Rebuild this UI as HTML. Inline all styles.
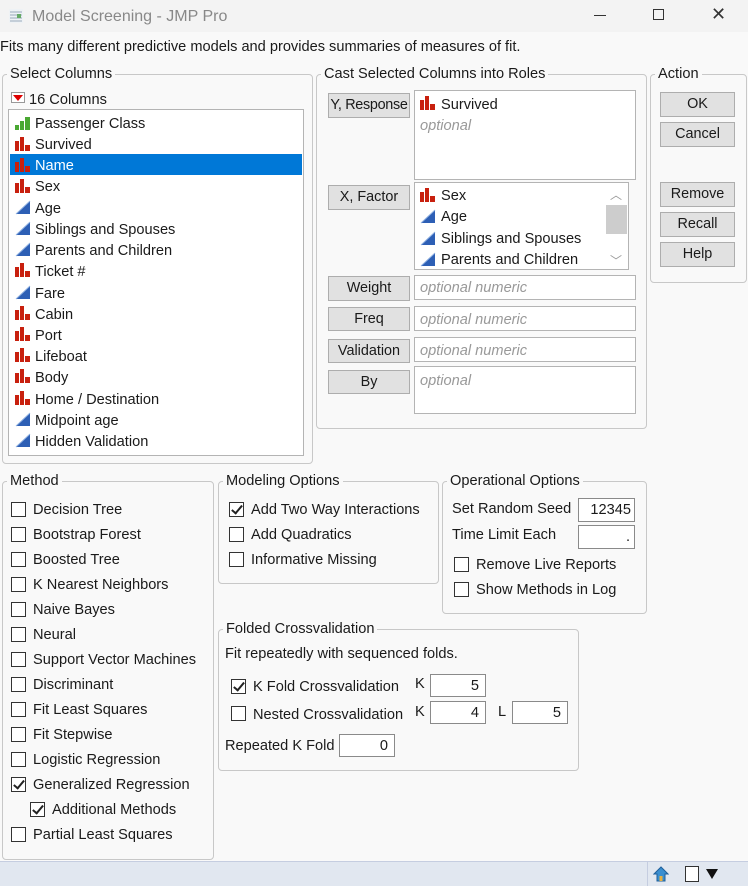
<!DOCTYPE html>
<html><head><meta charset="utf-8"><style>
*{box-sizing:border-box;margin:0;padding:0}
body{width:748px;height:886px;background:#f9f9f9;font-family:"Liberation Sans",sans-serif;font-size:14.6px;color:#1a1a1a;position:relative;overflow:hidden}
.a{position:absolute;white-space:nowrap}
.t{position:absolute;white-space:nowrap;line-height:17px;padding-top:2px}
.grp{position:absolute;border:1px solid #c8c8c8;border-radius:4px}
.gl{position:absolute;background:#f9f9f9;padding:0 3px;line-height:17px;top:-9px;left:4px}
.btn{position:absolute;background:#e1e1e1;border:1px solid #adadad;text-align:center;line-height:25px;white-space:nowrap;font-size:14.4px;display:flex;align-items:center;justify-content:center}
.box{position:absolute;background:#fff;border:1px solid #b4b4b4}
.cb{position:absolute;width:15px;height:15px;border:1px solid #333;background:#fff}
.cb.on::after{content:"";position:absolute;left:4px;top:0px;width:4px;height:9px;border:solid #222;border-width:0 2px 2px 0;transform:rotate(40deg)}
.ph{color:#999;font-style:italic}
.num{position:absolute;background:#fff;border:1px solid #8a8a8a;text-align:right;padding-right:6px;line-height:22px}
svg.i{position:absolute}
</style></head><body>
<div class="a" style="left:0;top:0;width:748px;height:32px;background:#f3f3f3"></div>
<svg class="i" style="left:9px;top:9px" width="14" height="14"><rect x="0" y="0" width="14" height="14" fill="#eef2f5"/><g stroke="#9ab" stroke-width="1"><line x1="1" y1="3" x2="13" y2="3"/><line x1="1" y1="6" x2="13" y2="6"/><line x1="1" y1="9" x2="13" y2="9"/><line x1="1" y1="12" x2="13" y2="12"/></g><rect x="8" y="5" width="4" height="4" fill="#6a6"/></svg>
<div class="t" style="left:32px;top:6px;color:#888;font-size:16px">Model Screening - JMP Pro</div>
<div class="a" style="left:594px;top:15px;width:12px;border-top:1px solid #333"></div>
<div class="a" style="left:653px;top:9px;width:11px;height:11px;border:1px solid #333"></div>
<div class="t" style="left:711px;top:4px;font-size:18px;color:#333">✕</div>
<div class="t" style="left:0;top:37px">Fits many different predictive models and provides summaries of measures of fit.</div>

<div class="grp" style="left:2px;top:74px;width:311px;height:390px"><div class="gl">Select Columns</div></div>
<div class="a" style="left:11px;top:92px;width:14px;height:11px;border:1px solid #999;background:#fff"></div>
<svg class="i" style="left:13px;top:95px" width="10" height="6"><path d="M0 0H10L5 6Z" fill="#d00"/></svg>
<div class="t" style="left:29px;top:90px">16 Columns</div>
<div class="box" style="left:8px;top:109px;width:296px;height:347px"></div>
<div class="a" style="left:10px;top:154px;width:292px;height:21px;background:#0078d7"></div>
<svg width="0" height="0" style="position:absolute"><defs>
<g id="nom"><rect x="0" y="4" width="4" height="10" fill="#c8200e"/><rect x="5" y="0" width="4" height="14" fill="#c8200e"/><rect x="10" y="8" width="5" height="6" fill="#c8200e"/></g>
<g id="ord"><rect x="0" y="9" width="4" height="5" fill="#4aa832"/><rect x="5" y="5" width="4" height="9" fill="#4aa832"/><rect x="10" y="1" width="5" height="13" fill="#4aa832"/></g>
<g id="con"><path d="M1 14L15 1V14Z" fill="#2d5fb5"/><path d="M1 14L15 1" stroke="#8fb0e0" stroke-width="1"/></g>
</defs></svg>
<svg class="i" style="left:15px;top:116px" width="16" height="15"><use href="#ord"/></svg><div class="t" style="left:35px;top:114px">Passenger Class</div>
<svg class="i" style="left:15px;top:137px" width="16" height="15"><use href="#nom"/></svg><div class="t" style="left:35px;top:135px">Survived</div>
<svg class="i" style="left:15px;top:158px" width="16" height="15"><use href="#nom"/></svg><div class="t" style="left:35px;top:156px;color:#fff">Name</div>
<svg class="i" style="left:15px;top:179px" width="16" height="15"><use href="#nom"/></svg><div class="t" style="left:35px;top:177px">Sex</div>
<svg class="i" style="left:15px;top:200px" width="16" height="15"><use href="#con"/></svg><div class="t" style="left:35px;top:199px">Age</div>
<svg class="i" style="left:15px;top:221px" width="16" height="15"><use href="#con"/></svg><div class="t" style="left:35px;top:220px">Siblings and Spouses</div>
<svg class="i" style="left:15px;top:242px" width="16" height="15"><use href="#con"/></svg><div class="t" style="left:35px;top:241px">Parents and Children</div>
<svg class="i" style="left:15px;top:263px" width="16" height="15"><use href="#nom"/></svg><div class="t" style="left:35px;top:262px">Ticket #</div>
<svg class="i" style="left:15px;top:285px" width="16" height="15"><use href="#con"/></svg><div class="t" style="left:35px;top:284px">Fare</div>
<svg class="i" style="left:15px;top:306px" width="16" height="15"><use href="#nom"/></svg><div class="t" style="left:35px;top:305px">Cabin</div>
<svg class="i" style="left:15px;top:327px" width="16" height="15"><use href="#nom"/></svg><div class="t" style="left:35px;top:326px">Port</div>
<svg class="i" style="left:15px;top:348px" width="16" height="15"><use href="#nom"/></svg><div class="t" style="left:35px;top:347px">Lifeboat</div>
<svg class="i" style="left:15px;top:369px" width="16" height="15"><use href="#nom"/></svg><div class="t" style="left:35px;top:368px">Body</div>
<svg class="i" style="left:15px;top:391px" width="16" height="15"><use href="#nom"/></svg><div class="t" style="left:35px;top:390px">Home / Destination</div>
<svg class="i" style="left:15px;top:412px" width="16" height="15"><use href="#con"/></svg><div class="t" style="left:35px;top:411px">Midpoint age</div>
<svg class="i" style="left:15px;top:433px" width="16" height="15"><use href="#con"/></svg><div class="t" style="left:35px;top:432px">Hidden Validation</div>

<div class="grp" style="left:316px;top:74px;width:331px;height:355px"><div class="gl">Cast Selected Columns into Roles</div></div>
<div class="btn" style="left:328px;top:93px;width:82px;height:25px;letter-spacing:-0.3px">Y, Response</div>
<div class="box" style="left:414px;top:90px;width:222px;height:90px"></div>
<svg class="i" style="left:420px;top:96px" width="16" height="15"><use href="#nom"/></svg><div class="t" style="left:441px;top:95px">Survived</div>
<div class="t ph" style="left:420px;top:116px">optional</div>
<div class="btn" style="left:328px;top:185px;width:82px;height:25px">X, Factor</div>
<div class="box" style="left:414px;top:182px;width:215px;height:88px"></div>
<div class="a" style="left:606px;top:205px;width:21px;height:29px;background:#cdcdcd"></div>
<div class="t" style="left:610px;top:185px;color:#999;font-size:12px">︿</div>
<div class="t" style="left:610px;top:251px;color:#999;font-size:12px">﹀</div>
<svg class="i" style="left:420px;top:188px" width="16" height="15"><use href="#nom"/></svg><div class="t" style="left:441px;top:186px">Sex</div>
<svg class="i" style="left:420px;top:209px" width="16" height="15"><use href="#con"/></svg><div class="t" style="left:441px;top:207px">Age</div>
<svg class="i" style="left:420px;top:231px" width="16" height="15"><use href="#con"/></svg><div class="t" style="left:441px;top:229px">Siblings and Spouses</div>
<svg class="i" style="left:420px;top:252px" width="16" height="15"><use href="#con"/></svg><div class="t" style="left:441px;top:250px">Parents and Children</div>
<div class="btn" style="left:328px;top:276px;width:82px;height:25px">Weight</div>
<div class="box" style="left:414px;top:275px;width:222px;height:25px"></div><div class="t ph" style="left:420px;top:278px">optional numeric</div>
<div class="btn" style="left:328px;top:307px;width:82px;height:24px">Freq</div>
<div class="box" style="left:414px;top:306px;width:222px;height:25px"></div><div class="t ph" style="left:420px;top:310px">optional numeric</div>
<div class="btn" style="left:328px;top:339px;width:82px;height:24px">Validation</div>
<div class="box" style="left:414px;top:337px;width:222px;height:25px"></div><div class="t ph" style="left:420px;top:341px">optional numeric</div>
<div class="btn" style="left:328px;top:370px;width:82px;height:24px">By</div>
<div class="box" style="left:414px;top:366px;width:222px;height:48px"></div><div class="t ph" style="left:420px;top:371px">optional</div>

<div class="grp" style="left:650px;top:74px;width:97px;height:209px"><div class="gl">Action</div></div>
<div class="btn" style="left:660px;top:92px;width:75px;height:25px">OK</div>
<div class="btn" style="left:660px;top:122px;width:75px;height:25px">Cancel</div>
<div class="btn" style="left:660px;top:182px;width:75px;height:25px">Remove</div>
<div class="btn" style="left:660px;top:212px;width:75px;height:25px">Recall</div>
<div class="btn" style="left:660px;top:242px;width:75px;height:25px">Help</div>

<div class="grp" style="left:2px;top:481px;width:212px;height:379px"><div class="gl">Method</div></div>
<div class="cb" style="left:11px;top:502px"></div><div class="t" style="left:33px;top:500px">Decision Tree</div>
<div class="cb" style="left:11px;top:527px"></div><div class="t" style="left:33px;top:525px">Bootstrap Forest</div>
<div class="cb" style="left:11px;top:552px"></div><div class="t" style="left:33px;top:550px">Boosted Tree</div>
<div class="cb" style="left:11px;top:577px"></div><div class="t" style="left:33px;top:575px">K Nearest Neighbors</div>
<div class="cb" style="left:11px;top:602px"></div><div class="t" style="left:33px;top:600px">Naive Bayes</div>
<div class="cb" style="left:11px;top:627px"></div><div class="t" style="left:33px;top:625px">Neural</div>
<div class="cb" style="left:11px;top:652px"></div><div class="t" style="left:33px;top:650px">Support Vector Machines</div>
<div class="cb" style="left:11px;top:677px"></div><div class="t" style="left:33px;top:675px">Discriminant</div>
<div class="cb" style="left:11px;top:702px"></div><div class="t" style="left:33px;top:700px">Fit Least Squares</div>
<div class="cb" style="left:11px;top:727px"></div><div class="t" style="left:33px;top:725px">Fit Stepwise</div>
<div class="cb" style="left:11px;top:752px"></div><div class="t" style="left:33px;top:750px">Logistic Regression</div>
<div class="cb on" style="left:11px;top:777px"></div><div class="t" style="left:33px;top:775px">Generalized Regression</div>
<div class="cb on" style="left:30px;top:802px"></div><div class="t" style="left:52px;top:800px">Additional Methods</div>
<div class="cb" style="left:11px;top:827px"></div><div class="t" style="left:33px;top:825px">Partial Least Squares</div>

<div class="grp" style="left:218px;top:481px;width:221px;height:103px"><div class="gl">Modeling Options</div></div>
<div class="cb on" style="left:229px;top:502px"></div><div class="t" style="left:251px;top:500px">Add Two Way Interactions</div>
<div class="cb" style="left:229px;top:527px"></div><div class="t" style="left:251px;top:525px">Add Quadratics</div>
<div class="cb" style="left:229px;top:552px"></div><div class="t" style="left:251px;top:550px">Informative Missing</div>

<div class="grp" style="left:442px;top:481px;width:205px;height:133px"><div class="gl">Operational Options</div></div>
<div class="t" style="left:452px;top:499px">Set Random Seed</div>
<div class="num" style="left:578px;top:498px;width:57px;height:24px;padding-right:3px">12345</div>
<div class="t" style="left:452px;top:525px">Time Limit Each</div>
<div class="num" style="left:578px;top:525px;width:57px;height:24px;padding-right:4px">.</div>
<div class="cb" style="left:454px;top:557px"></div><div class="t" style="left:476px;top:555px">Remove Live Reports</div>
<div class="cb" style="left:454px;top:582px"></div><div class="t" style="left:476px;top:580px">Show Methods in Log</div>

<div class="grp" style="left:218px;top:629px;width:361px;height:142px"><div class="gl">Folded Crossvalidation</div></div>
<div class="t" style="left:225px;top:644px">Fit repeatedly with sequenced folds.</div>
<div class="cb on" style="left:231px;top:679px"></div><div class="t" style="left:253px;top:677px">K Fold Crossvalidation</div>
<div class="t" style="left:415px;top:674px">K</div>
<div class="num" style="left:430px;top:674px;width:56px;height:23px">5</div>
<div class="cb" style="left:231px;top:706px"></div><div class="t" style="left:253px;top:705px">Nested Crossvalidation</div>
<div class="t" style="left:415px;top:702px">K</div>
<div class="num" style="left:430px;top:701px;width:56px;height:23px">4</div>
<div class="t" style="left:498px;top:702px">L</div>
<div class="num" style="left:512px;top:701px;width:56px;height:23px">5</div>
<div class="t" style="left:225px;top:736px">Repeated K Fold</div>
<div class="num" style="left:339px;top:734px;width:56px;height:23px">0</div>

<div class="a" style="left:0;top:861px;width:748px;height:25px;background:#e1e7f0;border-top:1px solid #c5cde0"></div>
<div class="a" style="left:647px;top:862px;height:24px;border-left:1px solid #c5cde0"></div>
<svg class="i" style="left:653px;top:866px" width="16" height="16"><path d="M8 1L1 8H4V15H12V8H15Z" fill="#3a8fd0" stroke="#1f5f9a"/><rect x="6.5" y="10" width="3" height="5" fill="#e8b040"/></svg>
<div class="a" style="left:685px;top:866px;width:14px;height:16px;background:#fff;border:1px solid #333"></div>
<svg class="i" style="left:706px;top:869px" width="12" height="10"><path d="M0 0H12L6 10Z" fill="#111"/></svg>
</body></html>
